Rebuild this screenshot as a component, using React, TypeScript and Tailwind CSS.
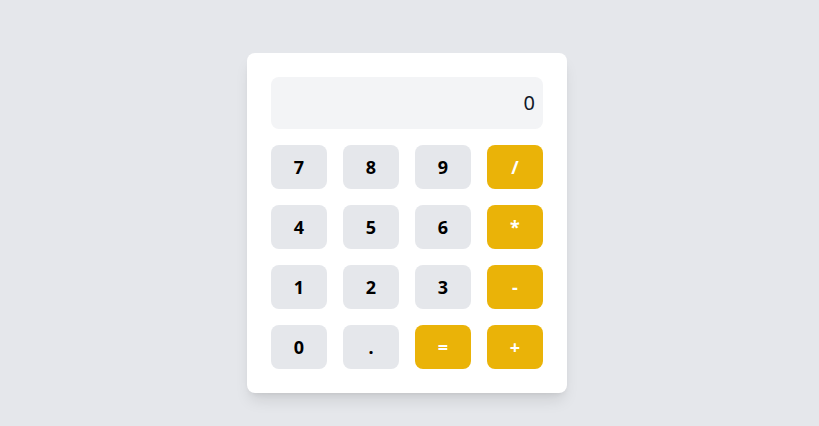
import React, { useState } from 'react'

const keys = ['7', '8', '9', '/', '4', '5', '6', '*', '1', '2', '3', '-', '0', '.', '=', '+']
const ops = ['/', '*', '-', '+', '=']

export default function App() {
  const [display, setDisplay] = useState('0')

  const press = (k: string) => {
    if (k === '=') {
      try {
        // eslint-disable-next-line no-new-func
        setDisplay(String(Function(`return (${display})`)()))
      } catch {
        setDisplay('Error')
      }
      return
    }
    setDisplay((d) => (d === '0' && !ops.includes(k) ? k : d + k))
  }

  return (
    <div
      className="min-h-screen bg-gray-200 flex justify-center items-start pt-[53px] pr-[5px]"
      style={{ fontFamily: '"Noto Sans", "Open Sans", Arial, sans-serif' }}
    >
      <div className="w-[320px] bg-white rounded-lg shadow-lg p-6">
        <div className="h-[52px] bg-gray-100 rounded-lg flex items-center justify-end px-2 text-xl text-gray-900">
          {display}
        </div>
        <div className="grid grid-cols-4 gap-4 mt-4">
          {keys.map((k) => (
            <button
              key={k}
              onClick={() => press(k)}
              className={
                ops.includes(k)
                  ? 'h-11 rounded-lg bg-[#eab308] text-white font-bold text-lg'
                  : 'h-11 rounded-lg bg-gray-200 text-black font-bold text-lg'
              }
            >
              {k}
            </button>
          ))}
        </div>
      </div>
    </div>
  )
}
